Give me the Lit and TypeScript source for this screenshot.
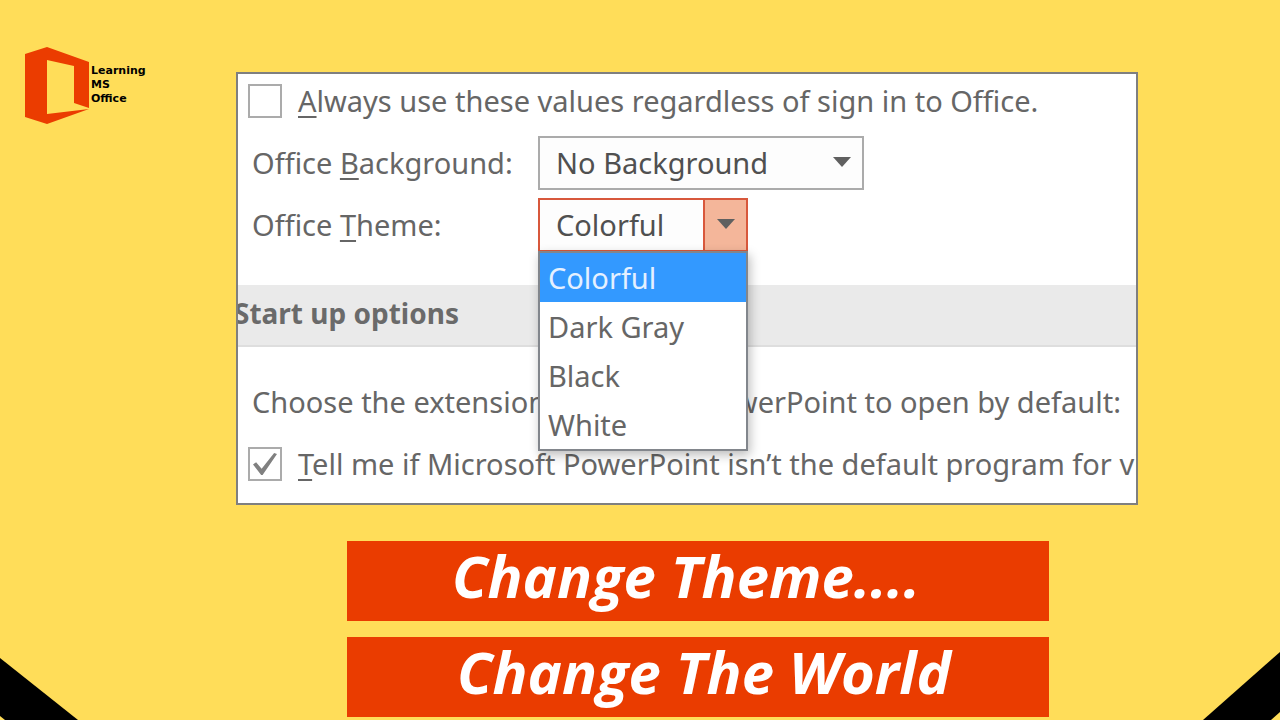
import { LitElement, html, css } from "lit";
import { customElement, state } from "lit/decorators.js";

const THEMES = ["Colorful", "Dark Gray", "Black", "White"];

@customElement("options-panel")
class OptionsPanel extends LitElement {
  @state() private theme = "Colorful";

  static styles = css`
    :host {
      display: block;
      border: 2px solid #7f7f7f;
      background: #fff;
      color: #666;
      font: 29px/36px "Noto Sans", "Open Sans", sans-serif;
      overflow: hidden;
      white-space: nowrap;
    }
    .row {
      display: flex;
      align-items: center;
      height: 54px;
      padding-left: 14px;
      margin-bottom: 8px;
    }
    .check {
      padding-left: 10px;
      gap: 16px;
    }
    .box {
      appearance: none;
      flex: none;
      display: grid;
      place-items: center;
      width: 34px;
      height: 34px;
      margin: 0;
      border: 2px solid #ababab;
      background: #fff;
    }
    .box:checked::before {
      content: "";
      width: 24px;
      height: 22px;
      background: #808080;
      clip-path: polygon(0 52%, 13% 42%, 36% 72%, 88% 0, 100% 4%, 40% 100%, 34% 100%);
    }
    .key {
      text-decoration: underline;
      text-decoration-thickness: 2px;
      text-underline-offset: 4px;
      text-decoration-skip-ink: none;
    }
    .name {
      flex: none;
      width: 286px;
    }
    .field {
      position: relative;
      display: flex;
      flex: none;
      height: 54px;
      box-sizing: border-box;
      border: 2px solid #ababab;
      background: #fdfdfd;
    }
    .wide {
      width: 326px;
    }
    .narrow {
      width: 210px;
      border-color: #d8583c;
    }
    select {
      appearance: none;
      flex: 1;
      min-width: 0;
      border: 0;
      padding: 0 0 0 16px;
      background: none;
      color: #505050;
      font: inherit;
      outline: none;
    }
    .arrow {
      display: grid;
      place-items: center;
      width: 41px;
      padding-bottom: 2px;
      pointer-events: none;
    }
    .narrow .arrow {
      border-left: 2px solid #d8583c;
      background: #f4b69a;
    }
    .arrow svg {
      width: 18px;
      height: 10px;
      fill: #606060;
    }
    .menu {
      position: absolute;
      z-index: 1;
      top: 51px;
      left: -2px;
      right: -2px;
      margin: 0;
      padding: 0;
      list-style: none;
      border: 2px solid #82868c;
      background: #fff;
      box-shadow: 2px 4px 10px #0004;
    }
    .item {
      height: 49px;
      padding-left: 8px;
      line-height: 50px;
    }
    .item[aria-selected="true"] {
      background: #3399ff;
      color: #e4f0ff;
    }
    .band {
      margin: 33px 0 28px;
      border-bottom: 2px solid #dedede;
      background: #eaeaea;
      color: #6a6a6a;
      font-size: 28px;
      font-weight: 700;
      line-height: 56px;
      height: 60px;
      text-indent: -4px;
    }
    .last {
      margin-bottom: 12px;
    }
  `;

  private arrow() {
    return html`<span class="arrow"><svg viewBox="0 0 18 10" aria-hidden="true"><path d="M0 0H18L9 10Z" /></svg></span>`;
  }

  render() {
    return html`
      <div class="row check">
        <input class="box" type="checkbox" id="always" />
        <label for="always"><span class="key">A</span>lways use these values regardless of sign in to Office.</label>
      </div>
      <div class="row">
        <label class="name" for="bg">Office <span class="key">B</span>ackground:</label>
        <div class="field wide">
          <select id="bg"><option>No Background</option></select>
          ${this.arrow()}
        </div>
      </div>
      <div class="row">
        <label class="name" for="theme">Office <span class="key">T</span>heme:</label>
        <div class="field narrow">
          <select id="theme" .value=${this.theme}>
            ${THEMES.map((t) => html`<option ?selected=${t === this.theme}>${t}</option>`)}
          </select>
          ${this.arrow()}
          <ul class="menu" role="listbox" aria-label="Office Theme">
            ${THEMES.map(
              (t) => html`<li class="item" role="option" aria-selected=${t === this.theme} @click=${() => (this.theme = t)}>${t}</li>`
            )}
          </ul>
        </div>
      </div>
      <div class="band">Start up options</div>
      <div class="row">Choose the extensions you want PowerPoint to open by default:</div>
      <div class="row check last">
        <input class="box" type="checkbox" id="tell" checked />
        <label for="tell"><span class="key">T</span>ell me if Microsoft PowerPoint isn’t the default program for viewing</label>
      </div>
    `;
  }
}

@customElement("app-root")
class AppRoot extends LitElement {
  static styles = css`
    :host {
      position: relative;
      display: grid;
      grid-template-columns: 236px minmax(0, 1fr) 142px;
      align-items: start;
      box-sizing: border-box;
      min-height: 100vh;
      background: #ffdd59;
      overflow: hidden;
    }
    .brand {
      display: flex;
      align-items: center;
      gap: 2px;
      padding: 46px 0 0 25px;
      color: #000;
      font: 700 11px/14px "DejaVu Sans", sans-serif;
    }
    .logo {
      flex: none;
      width: 64px;
      height: 78px;
      fill: #eb3c00;
    }
    main {
      padding-top: 72px;
    }
    .banners {
      display: grid;
      gap: 16px;
      padding: 36px 89px 0 111px;
    }
    .banner {
      height: 80px;
      margin: 0;
      background: #ea3c00;
      color: #fff;
      font: italic 700 58px/70px "Open Sans", sans-serif;
      text-align: center;
      white-space: nowrap;
    }
    .first {
      padding-right: 24px;
    }
    .second {
      padding-left: 12px;
    }
    .corner {
      position: absolute;
      bottom: 0;
      width: 80px;
      height: 70px;
    }
    .left {
      left: 0;
    }
    .right {
      right: 0;
    }
  `;

  render() {
    return html`
      <svg class="corner left" viewBox="0 0 80 70" aria-hidden="true"><path d="M0 8L78 70H5L0 66Z" /></svg>
      <svg class="corner right" viewBox="0 0 80 70" aria-hidden="true"><path d="M80 2L3 70H71L80 62Z" /></svg>
      <header class="brand">
        <svg class="logo" viewBox="0 0 64 78" aria-hidden="true">
          <path d="M0 8L22 1L64 16V62L49 57V20L22 14V68L64 63L22 78L0 71Z" />
        </svg>
        <div>Learning<br />MS<br />Office</div>
      </header>
      <main>
        <options-panel></options-panel>
        <div class="banners">
          <h1 class="banner first">Change Theme....</h1>
          <h1 class="banner second">Change The World</h1>
        </div>
      </main>
    `;
  }
}
